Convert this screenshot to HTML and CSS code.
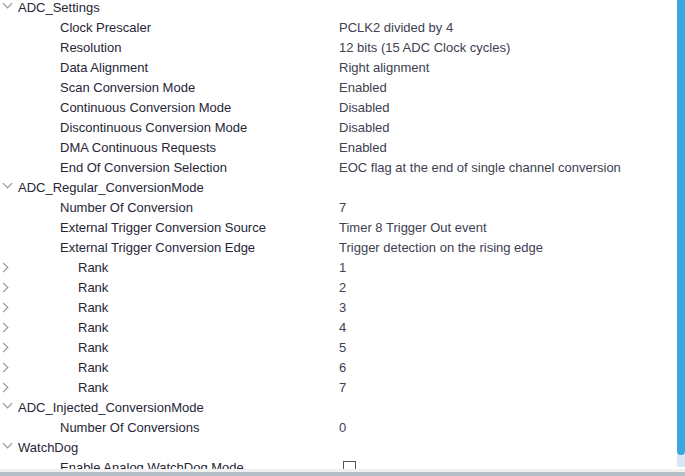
FILE: index.html
```html
<!DOCTYPE html>
<html>
<head>
<meta charset="utf-8">
<link rel="stylesheet" href="styles.css">
</head>
<body>
<div class="view">
  <div class="tree">
    <div class="row"><span class="tw down"></span><span class="lbl">ADC_Settings</span><span class="val"></span></div>
    <div class="row"><span class="tw"></span><span class="lbl l1">Clock Prescaler</span><span class="val">PCLK2 divided by 4</span></div>
    <div class="row"><span class="tw"></span><span class="lbl l1">Resolution</span><span class="val">12 bits (15 ADC Clock cycles)</span></div>
    <div class="row"><span class="tw"></span><span class="lbl l1">Data Alignment</span><span class="val">Right alignment</span></div>
    <div class="row"><span class="tw"></span><span class="lbl l1">Scan Conversion Mode</span><span class="val">Enabled</span></div>
    <div class="row"><span class="tw"></span><span class="lbl l1">Continuous Conversion Mode</span><span class="val">Disabled</span></div>
    <div class="row"><span class="tw"></span><span class="lbl l1">Discontinuous Conversion Mode</span><span class="val">Disabled</span></div>
    <div class="row"><span class="tw"></span><span class="lbl l1">DMA Continuous Requests</span><span class="val">Enabled</span></div>
    <div class="row"><span class="tw"></span><span class="lbl l1">End Of Conversion Selection</span><span class="val">EOC flag at the end of single channel conversion</span></div>
    <div class="row"><span class="tw down"></span><span class="lbl">ADC_Regular_ConversionMode</span><span class="val"></span></div>
    <div class="row"><span class="tw"></span><span class="lbl l1">Number Of Conversion</span><span class="val">7</span></div>
    <div class="row"><span class="tw"></span><span class="lbl l1">External Trigger Conversion Source</span><span class="val">Timer 8 Trigger Out event</span></div>
    <div class="row"><span class="tw"></span><span class="lbl l1">External Trigger Conversion Edge</span><span class="val">Trigger detection on the rising edge</span></div>
    <div class="row"><span class="tw right"></span><span class="lbl l2">Rank</span><span class="val">1</span></div>
    <div class="row"><span class="tw right"></span><span class="lbl l2">Rank</span><span class="val">2</span></div>
    <div class="row"><span class="tw right"></span><span class="lbl l2">Rank</span><span class="val">3</span></div>
    <div class="row"><span class="tw right"></span><span class="lbl l2">Rank</span><span class="val">4</span></div>
    <div class="row"><span class="tw right"></span><span class="lbl l2">Rank</span><span class="val">5</span></div>
    <div class="row"><span class="tw right"></span><span class="lbl l2">Rank</span><span class="val">6</span></div>
    <div class="row"><span class="tw right"></span><span class="lbl l2">Rank</span><span class="val">7</span></div>
    <div class="row"><span class="tw down"></span><span class="lbl">ADC_Injected_ConversionMode</span><span class="val"></span></div>
    <div class="row"><span class="tw"></span><span class="lbl l1">Number Of Conversions</span><span class="val">0</span></div>
    <div class="row"><span class="tw down"></span><span class="lbl">WatchDog</span><span class="val"></span></div>
    <div class="row"><span class="tw"></span><span class="lbl l1">Enable Analog WatchDog Mode</span><span class="val"><span class="check"></span></span></div>
  </div>
  <div class="scroll"><div class="thumb"></div></div>
</div>
<div class="hbar"></div>
</body>
</html>
```

FILE: styles.css
```css
html, body {
  margin: 0;
  padding: 0;
  background: #ffffff;
}
body {
  width: 685px;
  height: 476px;
  overflow: hidden;
  font-family: "Liberation Sans", Arial, sans-serif;
  font-size: 13px;
  color: #333340;
}
.view {
  position: relative;
  height: 469px;
  overflow: hidden;
}
.tree {
  margin-top: -2px;
}
.row {
  display: grid;
  grid-template-columns: 18px 321px 1fr;
  height: 20px;
  line-height: 20px;
  white-space: nowrap;
}
.tw {
  position: relative;
}
.tw.down::before {
  content: "";
  position: absolute;
  left: 4px;
  top: 2px;
  width: 6px;
  height: 6px;
  border-right: 1px solid #8c8c8c;
  border-bottom: 1px solid #8c8c8c;
  transform: rotate(45deg);
}
.tw.right::before {
  content: "";
  position: absolute;
  left: 0px;
  top: 6px;
  width: 6px;
  height: 6px;
  border-right: 1px solid #8c8c8c;
  border-bottom: 1px solid #8c8c8c;
  transform: rotate(-45deg);
}
.lbl {
  overflow: hidden;
  color: #262636;
}
.lbl.l1 { padding-left: 42px; }
.lbl.l2 { padding-left: 60px; }
.val {
  color: #404050;
}
.check {
  display: inline-block;
  width: 11px;
  height: 11px;
  border: 1px solid #555555;
  margin-left: 4px;
  vertical-align: -2px;
}
.scroll {
  position: absolute;
  top: 0;
  right: 0;
  width: 8px;
  height: 467px;
  background: #d8e7f5;
}
.thumb {
  height: 455px;
  background: #3aa8dd;
  border-radius: 0 0 4px 4px;
}
.hbar {
  height: 3px;
  background: #f0f0f0;
  border-bottom: 4px solid #b4bec6;
}
```
